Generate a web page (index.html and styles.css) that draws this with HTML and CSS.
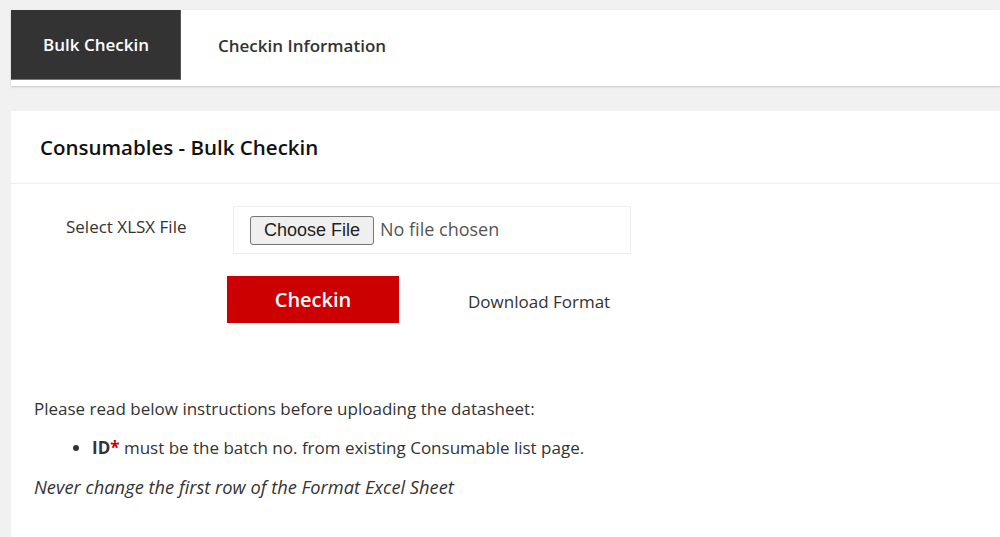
FILE: index.html
```html
<!DOCTYPE html>
<html lang="en">
<head>
    <meta charset="UTF-8">
    <title>Consumables - Bulk Checkin</title>
    <link rel="stylesheet" href="styles.css">
</head>
<body>
    <div class="tabs">
        <a class="tab active" href="#">Bulk Checkin</a>
        <a class="tab" href="#">Checkin Information</a>
    </div>

    <div class="card">
        <div class="card-header">Consumables - Bulk Checkin</div>
        <div class="card-body">
            <div class="form-row">
                <label class="form-label" for="xlsx">Select XLSX File</label>
                <div class="file-box">
                    <input type="file" id="xlsx" class="file-input">
                </div>
            </div>
            <div class="actions">
                <button class="checkin-button">Checkin</button>
                <a class="download-link" href="#">Download Format</a>
            </div>

            <div class="instructions">
                <p>Please read below instructions before uploading the datasheet:</p>
                <ul>
                    <li><b>ID<span class="req">*</span></b> must be the batch no. from existing Consumable list page.</li>
                </ul>
                <p class="note">Never change the first row of the Format Excel Sheet</p>
            </div>
        </div>
    </div>
</body>
</html>
```

FILE: styles.css
```css
body {
    margin: 0;
    padding: 10px 0 0 11px;
    height: 100vh;
    box-sizing: border-box;
    display: flex;
    flex-direction: column;
    background-color: #f1f1f1;
    font-family: "Open Sans", Arial, sans-serif;
    color: #333;
    overflow: hidden;
}
.tabs {
    display: flex;
    flex-shrink: 0;
    height: 76px;
    background-color: #fff;
    box-shadow: 0 1px 2px rgba(0, 0, 0, 0.18);
}
.tab {
    display: flex;
    align-items: center;
    height: 70px;
    padding: 0 32px;
    font-size: 17px;
    font-weight: 600;
    color: #333;
    text-decoration: none;
    white-space: nowrap;
    box-sizing: border-box;
}
.tab.active {
    width: 170px;
    padding-right: 0;
    background-color: #333;
    color: #fff;
    border-bottom: 1px solid #777;
    border-right: 1px solid #555;
}
.tab + .tab {
    padding-left: 37px;
}
.card {
    flex: 1;
    margin-top: 25px;
    background-color: #fff;
}
.card-header {
    height: 72px;
    padding-left: 29px;
    display: flex;
    align-items: center;
    font-size: 20.5px;
    font-weight: 600;
    color: #111;
    border-bottom: 1px solid #eee;
}
.card-body {
    padding: 22px 0 0 0;
}
.form-row {
    display: flex;
    align-items: flex-start;
}
.form-label {
    width: 167px;
    padding: 9px 0 0 55px;
    font-size: 17px;
    color: #333;
}
.file-box {
    width: 398px;
    height: 48px;
    border: 1px solid #eee;
    box-sizing: border-box;
    display: flex;
    align-items: center;
    padding-left: 16px;
}
.file-input {
    font-family: "Open Sans", Arial, sans-serif;
    font-size: 18px;
    color: #555;
}
.file-input::file-selector-button {
    font-family: Arial, "Liberation Sans", sans-serif;
    font-size: 18px;
    color: #222;
    padding: 3px 13px;
    margin-right: 6px;
    background-color: #efefef;
    border: 1px solid #767676;
    border-radius: 3px;
}
.actions {
    display: flex;
    align-items: center;
    margin: 22px 0 0 216px;
}
.checkin-button {
    width: 172px;
    height: 47px;
    background-color: #cc0000;
    border: none;
    color: #fff;
    font-family: "Open Sans", Arial, sans-serif;
    font-size: 20px;
    font-weight: 600;
    cursor: pointer;
}
.download-link {
    margin-left: 69px;
    padding-top: 4px;
    font-size: 17px;
    color: #333;
    text-decoration: none;
}
.instructions {
    margin-top: 74px;
    padding-left: 23px;
    font-size: 17px;
}
.instructions p {
    margin: 0;
    line-height: 23px;
}
.instructions ul {
    margin: 16px 0 16px 0;
    padding-left: 58px;
    line-height: 23px;
}
.req {
    color: #c00;
}
.note {
    font-style: italic;
    font-size: 18.3px;
}
```
